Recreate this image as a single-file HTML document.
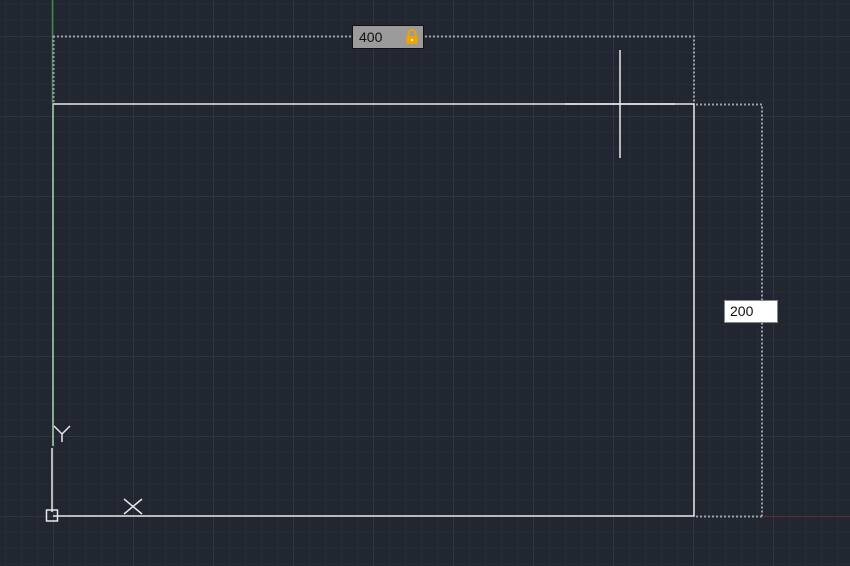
<!DOCTYPE html>
<html><head><style>
body{margin:0;width:850px;height:566px;overflow:hidden;background:#212630;font-family:"Liberation Sans",sans-serif}
svg{position:absolute;left:0;top:0}
</style></head><body>
<svg width="850" height="566" xmlns="http://www.w3.org/2000/svg">
<defs>
<pattern id="mn" x="5" y="4" width="16" height="16" patternUnits="userSpaceOnUse"><path d="M0.5 0V16M0 0.5H16" stroke="#262c37" stroke-width="1"/></pattern>
<pattern id="mj" x="53" y="36" width="80" height="80" patternUnits="userSpaceOnUse"><path d="M0.5 0V80M0 0.5H80" stroke="#2e3543" stroke-width="1"/></pattern>
</defs>
<rect width="850" height="566" fill="url(#mn)"/>
<rect width="850" height="566" fill="url(#mj)"/>
<line x1="762" y1="516.5" x2="850" y2="516.5" stroke="#6b2a2e" stroke-width="1"/>
<line x1="52.5" y1="0" x2="52.5" y2="104" stroke="#3f8a46" stroke-width="1.5"/>
<g stroke="#9aa0a8" stroke-width="2" stroke-dasharray="2 2" fill="none">
<path d="M53 36.5H694V104"/>
<path d="M53.5 36V104"/>
<path d="M696 104.5H762V516"/>
<path d="M696 516.5H762"/>
</g>
<g stroke="#e8e8e8" stroke-width="1.5" fill="none">
<path d="M53 104H694V516H53"/>
<path d="M620 50V158M565 104H675"/>
<path d="M52 448V512"/>
<rect x="46.5" y="510" width="11" height="11"/>
<path d="M124 499L142 514M142 499L124 514"/>
<path d="M54 426L62 434L70 426M62 434V442"/>
</g>
<line x1="53" y1="104" x2="53" y2="446" stroke="#a8d8a8" stroke-width="1.5"/>
</svg>
<div style="position:absolute;left:352px;top:25px;width:70px;height:22px;background:#9b9b9b;border:1px solid #111;font-size:14px;line-height:22px;color:#111"><span style="margin-left:6px">400</span>
<svg width="14" height="16" style="left:52px;top:3px" viewBox="0 0 14 16"><path d="M3.5 7V4.5a3.5 3.5 0 0 1 7 0V7" stroke="#f3a200" stroke-width="2" fill="none"/><rect x="1.5" y="7" width="11" height="8" fill="#f3a200"/><rect x="6" y="10" width="2" height="2" fill="#fff"/></svg></div>
<div style="position:absolute;left:724px;top:300px;width:54px;height:23px;background:#fff;border:1px solid #888;box-sizing:border-box;font-size:14px;line-height:21px;color:#111;padding-left:5px">200</div>
</body></html>
